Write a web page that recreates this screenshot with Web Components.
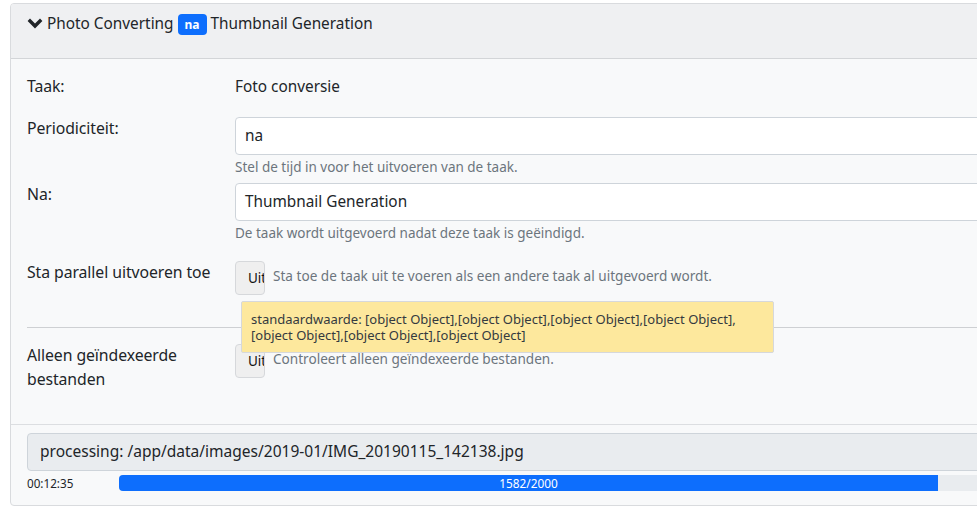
<!DOCTYPE html>
<html lang="nl"><head><meta charset="utf-8"><title>Photo Converting</title>
<style>
html,body{margin:0;padding:0;overflow:hidden;height:514px;background:#fff}
body{font-family:"Noto Sans","Open Sans",sans-serif;color:#212529;font-size:15.35px}
</style></head><body>
<task-card>
  <span slot="title">Photo Converting</span>
  <span slot="badge">na</span>
  <span slot="after">Thumbnail Generation</span>
  <form-row label="Taak:" kind="static" value="Foto conversie"></form-row>
  <form-row label="Periodiciteit:" kind="input" value="na" hint="Stel de tijd in voor het uitvoeren van de taak."></form-row>
  <form-row label="Na:" kind="input" wide value="Thumbnail Generation" hint="De taak wordt uitgevoerd nadat deze taak is geëindigd."></form-row>
  <form-row label="Sta parallel uitvoeren toe" kind="toggle" value="Uit" hint="Sta toe de taak uit te voeren als een andere taak al uitgevoerd wordt.">
    <yellow-tip>standaardwaarde: [object Object],[object Object],[object Object],[object Object],[object Object],[object Object],[object Object]</yellow-tip>
  </form-row>
  <hr-line></hr-line>
  <form-row label="Alleen geïndexeerde bestanden" kind="toggle" value="Uit" hint="Controleert alleen geïndexeerde bestanden." last></form-row>
  <task-progress slot="footer" message="processing: /app/data/images/2019-01/IMG_20190115_142138.jpg" time="00:12:35" text="1582/2000" pct="79.1"></task-progress>
</task-card>
<script>
const shadow=(el,html)=>{el.attachShadow({mode:'open'}).innerHTML=html};
customElements.define('task-card',class extends HTMLElement{constructor(){super();shadow(this,`<style>
:host{box-sizing:border-box;margin:3px 0 0 10px;width:1100px;height:503px;border:1px solid #d9dbde;border-radius:4px;background:#f8f9fa;overflow:hidden;display:flex;flex-direction:column}
header{box-sizing:border-box;height:55px;padding:7px 16px 0;background:#eff0f2;border-bottom:1px solid #d3d5d8;display:flex;align-items:flex-start;line-height:24px;color:#212529}
svg{width:16px;height:14px;margin:5px 4px 0 0;flex:none}
.badge{display:inline-block;background:#0d6efd;color:#fff;border-radius:4px;font-size:12px;font-weight:700;line-height:21px;height:21px;width:29px;text-align:center;margin:3px 4px 0 4px}
main{flex:1;padding:16px 16px 0;min-height:0}
footer{box-sizing:border-box;height:81px;border-top:1px solid #dcdee1;padding:8px 16px 0}
</style><header><svg viewBox="0 0 16 14"><path d="M.6 5 3 2.6l5 5 5-5L15.4 5 8 12.4z" fill="#212529"/></svg><slot name="title"></slot><span class="badge"><slot name="badge"></slot></span><slot name="after"></slot></header><main><slot></slot></main><footer><slot name="footer"></slot></footer>`)}});
customElements.define('form-row',class extends HTMLElement{connectedCallback(){if(this.shadowRoot)return;const k=this.getAttribute('kind'),v=this.getAttribute('value'),h=this.getAttribute('hint')||'';
let c='';
if(k==='static')c=`<div class="static">${v}</div>`;
if(k==='input')c=`<div class="input">${v}</div><div class="hint">${h}</div>`;
if(k==='toggle')c=`<div class="tog"><span class="btn"><span>${v}</span></span><span class="thint">${h}</span></div>`;
shadow(this,`<style>
:host{display:grid;grid-template-columns:208px 1fr;position:relative}
:host([kind=static]){height:42px}
:host([kind=input]){height:66px}
:host([wide]){height:78px}
:host([kind=toggle]){height:66px}
:host([last]){height:auto}
.label{line-height:24px;margin-top:-1px;font-size:15.8px;letter-spacing:-.005em}
.input{box-sizing:border-box;height:38px;border:1px solid #ced4da;border-radius:4px;background:#fff;padding:0 9px;line-height:34px;}
.hint{font-size:13.5px;line-height:20px;color:#6c757d;margin-top:2px}
.static{line-height:24px;margin-top:-1px;font-size:15.35px}
.tog{display:flex;align-items:flex-start}
.btn{box-sizing:border-box;width:30px;height:34px;border:1px solid #d6d8db;border-radius:4px;background:#efefef;overflow:hidden;padding-left:12px;line-height:32px;font-size:13.5px;color:#111;white-space:nowrap;flex:none;margin-right:8px}
.thint{font-size:13.6px;color:#6c757d;line-height:20px;margin-top:5px}
</style><div class="label">${this.getAttribute('label')}</div><div>${c}</div><slot></slot>`)}});
customElements.define('yellow-tip',class extends HTMLElement{constructor(){super();shadow(this,`<style>
:host{position:absolute;left:214px;top:40px;box-sizing:border-box;width:533px;height:52px;background:#fde89d;border:1px solid #d6d8db;border-radius:2px;padding:9px;font-size:13px;line-height:16px;color:#343a40;z-index:2}
</style><slot></slot>`)}});
customElements.define('hr-line',class extends HTMLElement{constructor(){super();shadow(this,`<style>:host{display:block;height:1px;background:#ced0d3;margin:0 -16px 16px 0}</style>`)}});
customElements.define('task-progress',class extends HTMLElement{connectedCallback(){if(this.shadowRoot)return;shadow(this,`<style>
:host{display:block}
.msg{box-sizing:border-box;height:38px;border:1px solid #ced4da;border-radius:4px;background:#e9ecef;padding:0 12px;line-height:34px;font-size:15.53px;width:1000px}
.row{display:flex;margin-top:4px;align-items:center;height:16px}
.t{width:92px;font-size:11.7px;color:#212529;flex:none}
.bar{width:1000px;height:16px;background:#e9ecef;border-radius:4px;overflow:hidden}
.fill{height:100%;width:819px;background:#0d6efd;color:#fff;font-size:11.8px;line-height:16px;text-align:center}
</style><div class="msg">${this.getAttribute('message')}</div><div class="row"><span class="t">${this.getAttribute('time')}</span><div class="bar"><div class="fill">${this.getAttribute('text')}</div></div></div>`)}});
</script>
</body></html>
